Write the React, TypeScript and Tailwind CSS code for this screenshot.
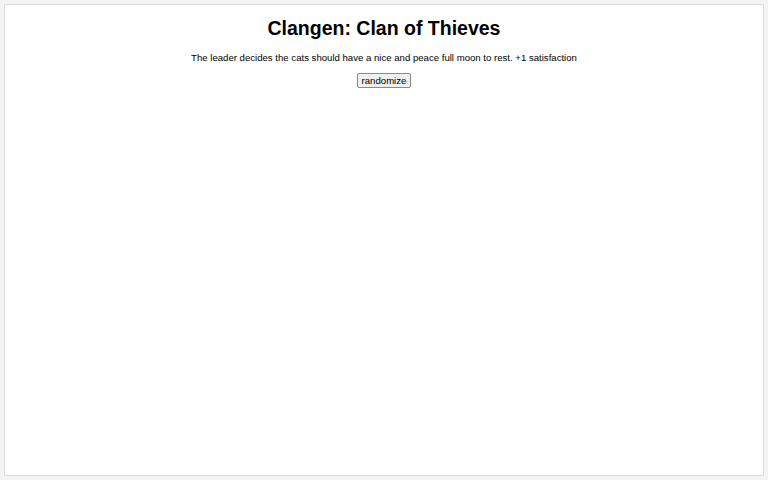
export default function App() {
  return (
    <div className="min-h-screen h-[480px] bg-[#f3f3f3] p-1 font-['Liberation_Sans',Arial,sans-serif] text-black">
      <div className="h-full border border-[#dcdcdc] bg-white flex flex-col items-center">
        <h1 className="mt-[12px] text-[19.5px] leading-[23px] font-bold">Clangen: Clan of Thieves</h1>
        <p className="mt-[12px] text-[9.6px] leading-[12px]">
          The leader decides the cats should have a nice and peace full moon to rest. +1 satisfaction
        </p>
        <button className="mt-[9px] px-[4px] py-[1px] text-[9.6px] leading-[11px] border border-[#8a8a8a] rounded-[2px] bg-[#efefef]">
          randomize
        </button>
      </div>
    </div>
  );
}
